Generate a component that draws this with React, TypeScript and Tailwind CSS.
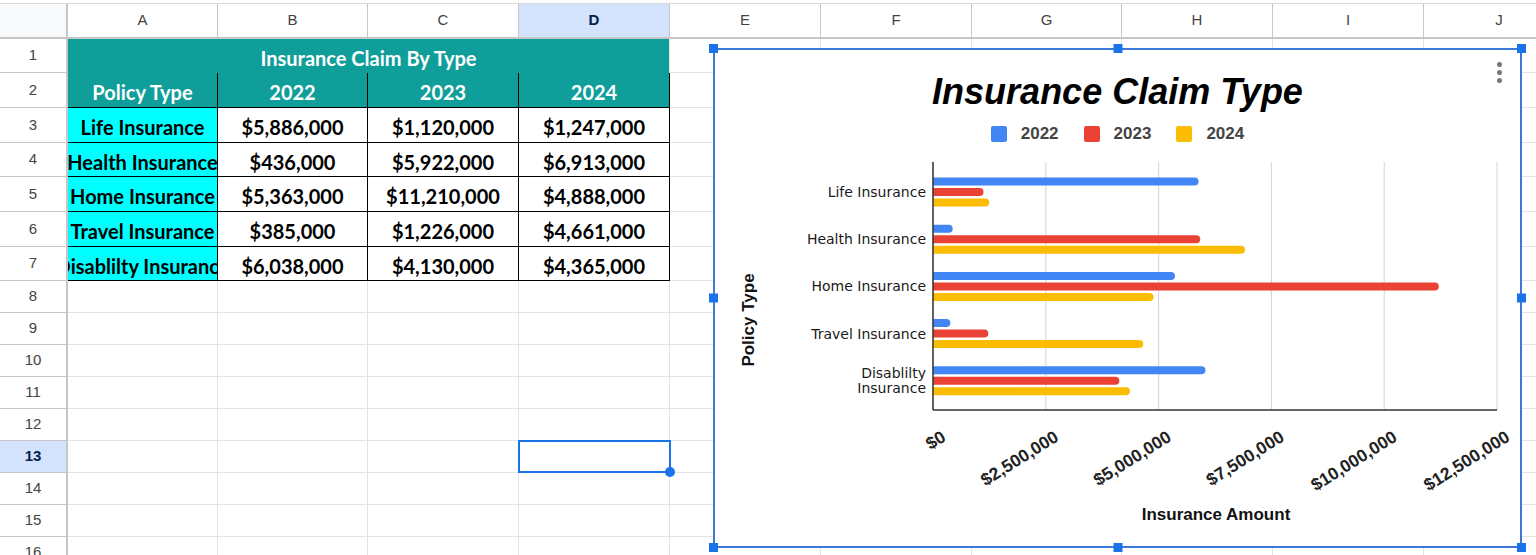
import React from 'react';

const ARIAL = "font-['Liberation_Sans',Arial,sans-serif]";
const CALIBRI = "font-['Lato','Liberation_Sans',sans-serif]";

const colLetters = ['A', 'B', 'C', 'D', 'E', 'F', 'G', 'H', 'I', 'J'];
const colW = [
  'w-[150px]',
  'w-[150px]',
  'w-[151px]',
  'w-[151px]',
  'w-[151px]',
  'w-[151px]',
  'w-[150px]',
  'w-[151px]',
  'w-[151px]',
  'w-[151px]',
];

// rows 1-7 are a bit taller than the default rows
const tableRowH = ['h-[34px]', 'h-[35px]', 'h-[35px]', 'h-[34px]', 'h-[35px]', 'h-[35px]', 'h-[34px]'];

const tableRows = [
  ['Life Insurance', '$5,886,000', '$1,120,000', '$1,247,000'],
  ['Health Insurance', '$436,000', '$5,922,000', '$6,913,000'],
  ['Home Insurance', '$5,363,000', '$11,210,000', '$4,888,000'],
  ['Travel Insurance', '$385,000', '$1,226,000', '$4,661,000'],
  ['Disablilty Insurance', '$6,038,000', '$4,130,000', '$4,365,000'],
];

const years = ['2022', '2023', '2024'];
const barColors = ['#4285f4', '#ea4335', '#fbbc04'];
const legendSwatch = ['bg-[#4285f4]', 'bg-[#ea4335]', 'bg-[#fbbc04]'];

const chartData = [
  { label: ['Life Insurance'], values: [5886000, 1120000, 1247000] },
  { label: ['Health Insurance'], values: [436000, 5922000, 6913000] },
  { label: ['Home Insurance'], values: [5363000, 11210000, 4888000] },
  { label: ['Travel Insurance'], values: [385000, 1226000, 4661000] },
  { label: ['Disablilty', 'Insurance'], values: [6038000, 4130000, 4365000] },
];

const ticks = ['$0', '$2,500,000', '$5,000,000', '$7,500,000', '$10,000,000', '$12,500,000'];

const RowNum = ({ n, h, active }: { n: number; h: string; active?: boolean }) => (
  <div
    className={`${h} w-[68px] shrink-0 flex items-center justify-center border-r-2 border-b border-[#c4c7c5] text-[15px] ${ARIAL} ${
      active ? 'bg-[#d3e3fd] text-[#041e49] font-bold' : 'bg-white text-[#444]'
    }`}
  >
    {n}
  </div>
);

const Empty = ({ i, h }: { i: number; h: string }) => (
  <div className={`${colW[i]} ${h} shrink-0 border-r border-b border-[#e2e3e3]`} />
);

const DataCell = ({ i, h, bg, text, children }: { i: number; h: string; bg: string; text: string; children: React.ReactNode }) => (
  <div
    className={`${colW[i]} ${h} shrink-0 flex items-center justify-center overflow-hidden whitespace-nowrap pt-[4px] border-r border-b border-black ${bg} ${text} text-[20px] font-bold ${CALIBRI}`}
  >
    <span className="shrink-0">{children}</span>
  </div>
);

const BarChart = () => {
  // svg coords: x = page x - 715, y = page y - 144
  const x0 = 218;
  const plotW = 564;
  const top = 18;
  const bottom = 266;
  const scale = plotW / 12500000;
  const centers = [48, 95.2, 142.4, 189.6, 236.8];

  const bar = (v: number, cy: number) => {
    const h = 8;
    const r = 4;
    const y = cy - h / 2;
    const end = Math.max(x0 + r, x0 + v * scale);
    return `M${x0} ${y}H${end - r}A${r} ${r} 0 0 1 ${end - r} ${y + h}H${x0}Z`;
  };

  return (
    <svg width="805" height="402" className={`block ${ARIAL}`}>
      {ticks.map((_, i) => (
        <line key={i} x1={x0 + i * 112.8} x2={x0 + i * 112.8} y1={top} y2={bottom} stroke="#d4d4d4" strokeWidth="1" />
      ))}

      {chartData.map((d, gi) =>
        d.values.map((v, bi) => (
          <path key={`${gi}-${bi}`} d={bar(v, centers[gi] + (bi - 1) * 10.5)} fill={barColors[bi]} />
        ))
      )}

      <line x1={x0} x2={x0} y1={top} y2={bottom} stroke="#333" strokeWidth="1.5" />
      <line x1={x0} x2={x0 + plotW} y1={bottom} y2={bottom} stroke="#333" strokeWidth="1.5" />

      <g className="font-['DejaVu_Sans',sans-serif] text-[14px]" fill="#1a1a1a">
        {chartData.map((d, gi) =>
          d.label.length === 1 ? (
            <text key={gi} x={211} y={centers[gi]} textAnchor="end" dominantBaseline="central">
              {d.label[0]}
            </text>
          ) : (
            <g key={gi}>
              <text x={211} y={centers[gi] - 7.5} textAnchor="end" dominantBaseline="central">
                {d.label[0]}
              </text>
              <text x={211} y={centers[gi] + 7.5} textAnchor="end" dominantBaseline="central">
                {d.label[1]}
              </text>
            </g>
          )
        )}
      </g>

      <g className="text-[17.5px] font-bold" fill="#222">
        {ticks.map((t, i) => {
          const ax = x0 + i * 112.8 + 14;
          const ay = 296;
          return (
            <text key={t} x={ax} y={ay} textAnchor="end" transform={`rotate(-32 ${ax} ${ay})`}>
              {t}
            </text>
          );
        })}
      </g>

      <text
        x={33}
        y={176}
        transform="rotate(-90 33 176)"
        textAnchor="middle"
        dominantBaseline="central"
        className="text-[17px] font-bold"
        fill="#111"
      >
        Policy Type
      </text>
      <text x={501} y={370} textAnchor="middle" dominantBaseline="central" className="text-[17px] font-bold" fill="#111">
        Insurance Amount
      </text>
    </svg>
  );
};

const Handle = ({ pos }: { pos: string }) => <div className={`absolute w-[9px] h-[9px] bg-[#1a73e8] ${pos}`} />;

const ChartCard = () => (
  <div className="absolute left-[713px] top-[48px] w-[809px] h-[500px] border-2 border-[#3d78d6] bg-white flex flex-col items-center">
    <h2 className={`mt-[22px] text-[36px] leading-[40px] font-bold italic text-black ${ARIAL}`}>Insurance Claim Type</h2>

    <div className={`mt-[12px] h-[20px] flex items-center gap-[25px] text-[17px] font-bold text-[#444] ${ARIAL}`}>
      {years.map((y, i) => (
        <div key={y} className="flex items-center gap-[14px]">
          <span className={`w-[16px] h-[16px] rounded-[2px] ${legendSwatch[i]}`} />
          <span>{y}</span>
        </div>
      ))}
    </div>

    <BarChart />

    {/* chart menu */}
    <div className="absolute top-[12px] right-[18px] flex flex-col gap-[3px]">
      <span className="w-[5px] h-[5px] rounded-full bg-[#777]" />
      <span className="w-[5px] h-[5px] rounded-full bg-[#777]" />
      <span className="w-[5px] h-[5px] rounded-full bg-[#777]" />
    </div>

    <Handle pos="-left-[6px] -top-[6px]" />
    <Handle pos="left-1/2 -translate-x-1/2 -top-[6px]" />
    <Handle pos="-right-[6px] -top-[6px]" />
    <Handle pos="-left-[6px] top-1/2 -translate-y-1/2" />
    <Handle pos="-right-[6px] top-1/2 -translate-y-1/2" />
    <Handle pos="-left-[6px] -bottom-[6px]" />
    <Handle pos="left-1/2 -translate-x-1/2 -bottom-[6px]" />
    <Handle pos="-right-[6px] -bottom-[6px]" />
  </div>
);

export default function App() {
  const restCols = [4, 5, 6, 7, 8, 9];
  const blankRows = [8, 9, 10, 11, 12, 13, 14, 15, 16];

  return (
    <div className="relative w-[1536px] h-[555px] overflow-hidden bg-white pt-[3px]">
      {/* column headers */}
      <div className="flex h-[36px] border-t border-[#dadce0]">
        <div className="w-[68px] shrink-0 bg-[#f8f9fa] border-r-2 border-b-2 border-[#c4c7c5]" />
        {colLetters.map((c, i) => (
          <div
            key={c}
            className={`${colW[i]} shrink-0 flex items-center justify-center border-r border-b-2 border-[#c4c7c5] text-[15px] ${ARIAL} ${
              c === 'D' ? 'bg-[#d3e3fd] text-[#041e49] font-bold' : 'bg-white text-[#444]'
            }`}
          >
            {c}
          </div>
        ))}
      </div>

      {/* row 1: merged title */}
      <div className="flex">
        <RowNum n={1} h={tableRowH[0]} />
        <div
          className={`w-[602px] ${tableRowH[0]} shrink-0 flex items-center justify-center pt-[4px] bg-[#0f9e99] text-white text-[20px] font-bold ${CALIBRI} border-r border-[#e2e3e3]`}
        >
          Insurance Claim By Type
        </div>
        {restCols.map((i) => (
          <Empty key={i} i={i} h={tableRowH[0]} />
        ))}
      </div>

      {/* row 2: column titles */}
      <div className="flex">
        <RowNum n={2} h={tableRowH[1]} />
        {['Policy Type', '2022', '2023', '2024'].map((t, i) => (
          <DataCell key={t} i={i} h={tableRowH[1]} bg="bg-[#0f9e99]" text="text-white">
            {t}
          </DataCell>
        ))}
        {restCols.map((i) => (
          <Empty key={i} i={i} h={tableRowH[1]} />
        ))}
      </div>

      {/* rows 3-7: data */}
      {tableRows.map((r, ri) => (
        <div key={ri} className="flex">
          <RowNum n={ri + 3} h={tableRowH[ri + 2]} />
          {r.map((v, i) => (
            <DataCell key={i} i={i} h={tableRowH[ri + 2]} bg={i === 0 ? 'bg-[#00ffff]' : 'bg-white'} text="text-black">
              {v}
            </DataCell>
          ))}
          {restCols.map((i) => (
            <Empty key={i} i={i} h={tableRowH[ri + 2]} />
          ))}
        </div>
      ))}

      {/* empty rows */}
      {blankRows.map((n) => (
        <div key={n} className="flex">
          <RowNum n={n} h="h-[32px]" active={n === 13} />
          {colLetters.map((_, i) => (
            <Empty key={i} i={i} h="h-[32px]" />
          ))}
        </div>
      ))}

      {/* active cell D13 */}
      <div className="absolute left-[518px] top-[440px] w-[153px] h-[33px] border-2 border-[#1a73e8]" />
      <div className="absolute left-[665px] top-[467px] w-[10px] h-[10px] rounded-full bg-[#1a73e8]" />

      <ChartCard />
    </div>
  );
}
